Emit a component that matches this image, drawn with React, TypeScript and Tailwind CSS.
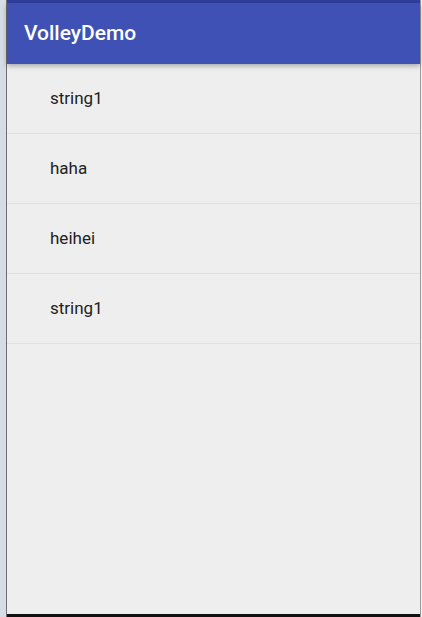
import React from "react";

const items = ["string1", "haha", "heihei", "string1"];

export default function App() {
  return (
    <div className="flex h-[617px] w-[422px] font-['Roboto',sans-serif]">
      {/* window frame on the left */}
      <div className="w-[6px] shrink-0 bg-[#d5dce6]" />
      <div className="w-px shrink-0 bg-[#6f6f6f]" />
      <div className="flex flex-1 flex-col bg-[#eeeeee]">
        <div className="h-[3px] bg-[#303f9f]" />
        <div className="relative z-10 flex h-[61px] items-center bg-[#3f51b5] pl-[17px] shadow-[0_2px_5px_rgba(0,0,0,0.3)]">
          <span className="text-[21px] font-medium text-white">VolleyDemo</span>
        </div>
        <div className="flex-1">
          {items.map((item, i) => (
            <div
              key={i}
              className="flex h-[70px] items-center border-b border-[#e0e0e0] pl-[43px] text-[17px] text-[#222222]"
            >
              {item}
            </div>
          ))}
        </div>
        <div className="h-[3px] bg-[#111111]" />
      </div>
      <div className="w-px shrink-0 bg-[#9a9a9a]" />
      <div className="w-px shrink-0 bg-[#f5f5f5]" />
    </div>
  );
}
